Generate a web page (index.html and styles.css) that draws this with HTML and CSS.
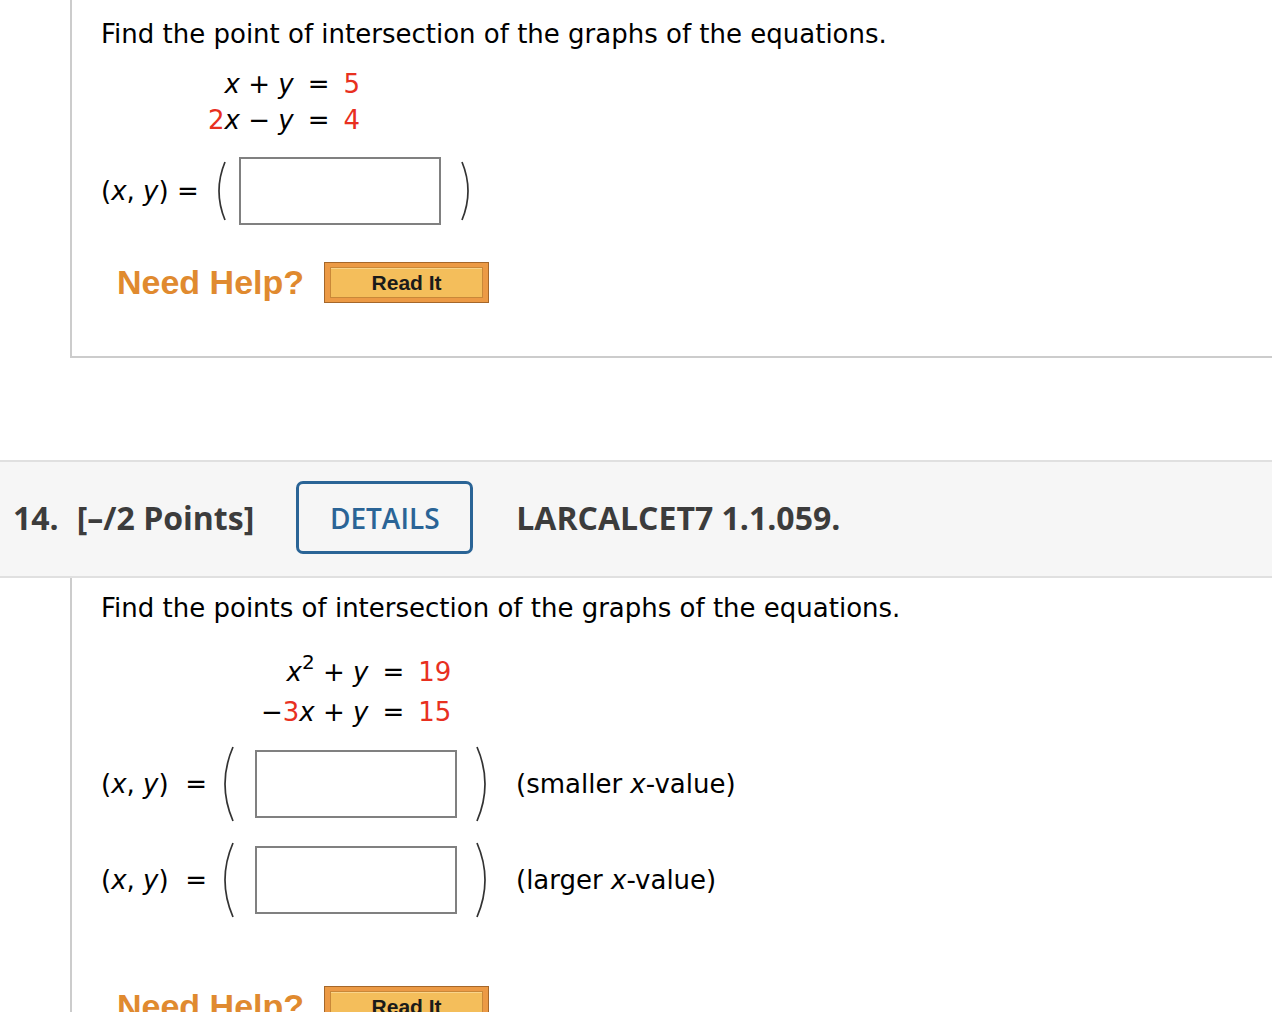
FILE: index.html
```html
<!DOCTYPE html>
<html>
<head>
<meta charset="utf-8">
<link rel="stylesheet" href="styles.css">
</head>
<body>
<div class="qbody first">
  <p class="prompt">Find the point of intersection of the graphs of the equations.</p>
  <div class="eqs eqs1">
    <span class="lhs"><i>x</i> + <i>y</i></span><span class="eq">=</span><span class="rhs red">5</span>
    <span class="lhs"><span class="red">2</span><i>x</i> − <i>y</i></span><span class="eq">=</span><span class="rhs red">4</span>
  </div>
  <div class="ans ans1">
    <span class="lbl">(<i>x</i>, <i>y</i>) =</span>
    <svg class="paren" width="16" height="60" viewBox="0 0 16 60"><path d="M12 1 Q0 30 12 59" fill="none" stroke="#333" stroke-width="1.7"/></svg>
    <span class="box"></span>
    <svg class="paren" width="16" height="60" viewBox="0 0 16 60"><path d="M4 1 Q16 30 4 59" fill="none" stroke="#333" stroke-width="1.7"/></svg>
  </div>
  <div class="help">
    <span class="needhelp">Need Help?</span>
    <span class="readit"><span class="readit-in">Read It</span></span>
  </div>
</div>

<div class="qhead">
  <span class="num">14.</span>
  <span class="pts">[–/2 Points]</span>
  <span class="details">DETAILS</span>
  <span class="code">LARCALCET7 1.1.059.</span>
</div>

<div class="qbody second">
  <p class="prompt">Find the points of intersection of the graphs of the equations.</p>
  <div class="eqs eqs2">
    <span class="lhs"><i>x</i><sup>2</sup> + <i>y</i></span><span class="eq">=</span><span class="rhs red">19</span>
    <span class="lhs">−<span class="red">3</span><i>x</i> + <i>y</i></span><span class="eq">=</span><span class="rhs red">15</span>
  </div>
  <div class="ans ans2">
    <span class="lbl">(<i>x</i>, <i>y</i>)&nbsp;&nbsp;=</span>
    <svg class="paren big" width="20" height="76" viewBox="0 0 20 76"><path d="M16 1 Q0 38 16 75" fill="none" stroke="#333" stroke-width="1.7"/></svg>
    <span class="box"></span>
    <svg class="paren big" width="20" height="76" viewBox="0 0 20 76"><path d="M4 1 Q20 38 4 75" fill="none" stroke="#333" stroke-width="1.7"/></svg>
    <span class="note">(smaller <i>x</i>-value)</span>
  </div>
  <div class="ans ans2">
    <span class="lbl">(<i>x</i>, <i>y</i>)&nbsp;&nbsp;=</span>
    <svg class="paren big" width="20" height="76" viewBox="0 0 20 76"><path d="M16 1 Q0 38 16 75" fill="none" stroke="#333" stroke-width="1.7"/></svg>
    <span class="box"></span>
    <svg class="paren big" width="20" height="76" viewBox="0 0 20 76"><path d="M4 1 Q20 38 4 75" fill="none" stroke="#333" stroke-width="1.7"/></svg>
    <span class="note">(larger <i>x</i>-value)</span>
  </div>
  <div class="help help2">
    <span class="needhelp">Need Help?</span>
    <span class="readit"><span class="readit-in">Read It</span></span>
  </div>
</div>
</body>
</html>
```

FILE: styles.css
```css
html, body {
  margin: 0;
  padding: 0;
  background: #fff;
  overflow: hidden;
  height: 1012px;
}
body {
  font-family: "DejaVu Sans", Verdana, sans-serif;
  font-size: 26px;
  color: #000;
}
i { font-style: italic; }
.red { color: #e8301f; }

.qbody {
  margin-left: 70px;
  border-left: 2px solid #cccccc;
  padding-left: 29px;
}
.qbody.first {
  border-bottom: 2px solid #cccccc;
  height: 358px;
  box-sizing: border-box;
  padding-top: 16px;
}
.qbody.second {
  padding-top: 12px;
  height: 436px;
  box-sizing: border-box;
}
.prompt {
  margin: 0;
  line-height: 36px;
}

.eqs {
  display: grid;
  grid-template-columns: auto auto auto;
  column-gap: 14px;
  width: max-content;
  line-height: 36px;
}
.eqs .lhs { justify-self: end; white-space: nowrap; }
.eqs .eq { justify-self: center; }
.eqs .rhs { justify-self: start; }
.eqs1 { margin-left: 107px; margin-top: 14px; }
.eqs2 { margin-left: 160px; margin-top: 26px; line-height: 40px; }
.eqs2 sup { font-size: 20px; line-height: 0; vertical-align: 12px; }

.ans {
  display: flex;
  align-items: center;
}
.ans1 { margin-top: 18px; height: 70px; }
.ans1 .lbl { width: 112px; white-space: nowrap; }
.ans1 .box { margin-left: 10px; margin-right: 17px; }

.box {
  display: inline-block;
  width: 198px;
  height: 64px;
  border: 2px solid #808080;
  background: #fff;
}

.ans2 { height: 80px; }
.eqs2 + .ans2 { margin-top: 12px; }
.ans2 + .ans2 { margin-top: 16px; }
.ans2 .lbl { width: 116px; white-space: nowrap; }
.ans2 .box { margin-left: 18px; margin-right: 16px; }
.ans2 .note { margin-left: 23px; white-space: nowrap; }

.help {
  display: flex;
  align-items: center;
  margin-left: 16px;
  margin-top: 36px;
}
.help2 { margin-top: 66px; }
.needhelp {
  font-family: "Liberation Sans", Arial, sans-serif;
  font-weight: bold;
  font-size: 34px;
  color: #e08a2f;
  margin-right: 20px;
}
.readit {
  display: inline-block;
  border: 1px solid #a5672a;
  background: #ec9a45;
  padding: 4px 5px;
}
.readit-in {
  display: block;
  width: 153px;
  height: 31px;
  box-sizing: border-box;
  border: 1px solid #c98838;
  background: #f4be5b;
  box-shadow: inset 0 1px 0 #f9d48a;
  font-family: "Liberation Sans", Arial, sans-serif;
  font-weight: bold;
  font-size: 21px;
  line-height: 29px;
  text-align: center;
  color: #1a1a1a;
}

.qhead {
  margin-top: 102px;
  height: 118px;
  box-sizing: border-box;
  border-top: 2px solid #e0e0e0;
  border-bottom: 2px solid #e0e0e0;
  background: #f6f6f6;
  display: flex;
  align-items: center;
  padding-left: 13px;
  padding-bottom: 3px;
  font-family: "Open Sans", sans-serif;
  font-weight: 700;
  font-size: 32px;
  color: #3c3c3c;
}
.qhead .num { margin-right: 18px; }
.qhead .pts { margin-right: 42px; }
.details {
  display: inline-flex;
  align-items: center;
  justify-content: center;
  width: 177px;
  height: 73px;
  box-sizing: border-box;
  border: 3px solid #2a6496;
  border-radius: 7px;
  color: #2a6496;
  font-weight: 600;
  font-size: 28px;
  margin-right: 43px;
}
```
